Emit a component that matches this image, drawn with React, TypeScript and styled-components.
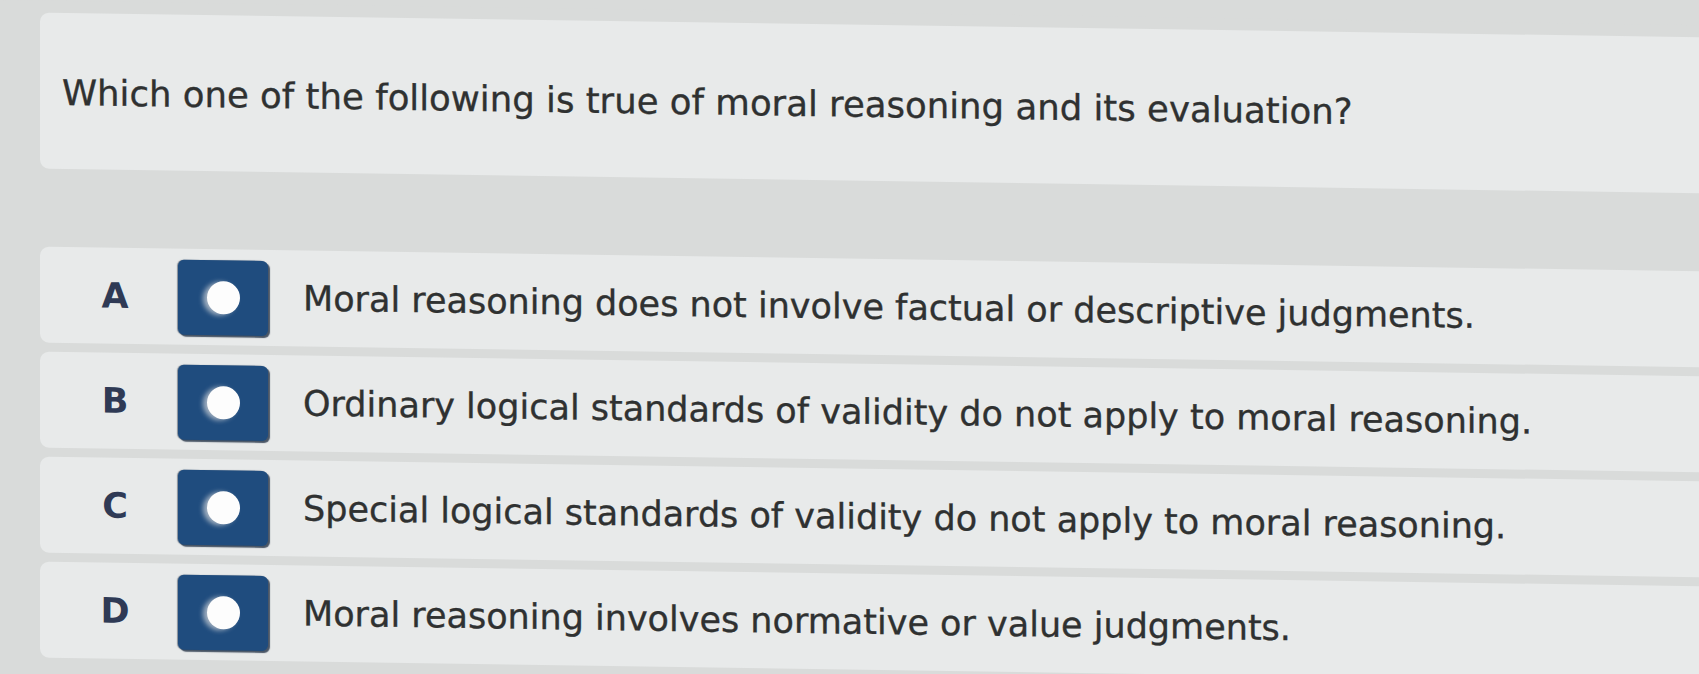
import React from "react";
import styled, { createGlobalStyle } from "styled-components";

const GlobalStyle = createGlobalStyle`
  html, body {
    margin: 0;
    padding: 0;
    background: #d9dbda;
    overflow: hidden;
  }
  body {
    font-family: "DejaVu Sans", Verdana, sans-serif;
  }
`;

const Page = styled.main`
  box-sizing: border-box;
  width: 1699px;
  height: 674px;
  padding: 12px 0 0 40px;
  background: #d9dbda;
  transform: skewY(0.85deg);
  transform-origin: 0 0;
`;

const QuestionCard = styled.section`
  box-sizing: border-box;
  height: 156px;
  padding: 59px 0 0 22px;
  background: #e8eaea;
  border-radius: 9px 0 0 9px;
`;

const QuestionText = styled.h1`
  margin: 0;
  font-size: 35.5px;
  line-height: 42px;
  font-weight: normal;
  color: #2f3131;
  -webkit-text-stroke: 0.35px #2f3131;
  white-space: nowrap;
`;

const OptionList = styled.ul`
  list-style: none;
  margin: 78px 0 0 0;
  padding: 0;
  display: flex;
  flex-direction: column;
  gap: 9px;
`;

const OptionRow = styled.li`
  box-sizing: border-box;
  height: 96px;
  display: flex;
  align-items: center;
  padding-left: 52px;
  background: #e8eaea;
  border-radius: 9px 0 0 9px;
`;

const Letter = styled.span`
  width: 46px;
  text-align: center;
  font-size: 35px;
  font-weight: bold;
  color: #2f3a55;
`;

const RadioBox = styled.span`
  box-sizing: border-box;
  width: 90px;
  height: 75px;
  margin-left: 40px;
  flex-shrink: 0;
  display: flex;
  align-items: center;
  justify-content: center;
  background: #1f4c7e;
  border-radius: 6px;
  box-shadow: 2px 2px 1px rgba(35, 50, 70, 0.8), -1px 0 1px rgba(35, 50, 70, 0.5);
`;

const RadioDot = styled.span`
  width: 33px;
  height: 33px;
  border-radius: 50%;
  background: #fdfdfd;
  box-shadow: -4px 1px 5px rgba(205, 210, 215, 0.75);
`;

const OptionText = styled.span`
  margin-left: 35px;
  font-size: 35px;
  color: #2f3131;
  -webkit-text-stroke: 0.35px #2f3131;
  white-space: nowrap;
`;

const options = [
  { letter: "A", text: "Moral reasoning does not involve factual or descriptive judgments." },
  { letter: "B", text: "Ordinary logical standards of validity do not apply to moral reasoning." },
  { letter: "C", text: "Special logical standards of validity do not apply to moral reasoning." },
  { letter: "D", text: "Moral reasoning involves normative or value judgments." },
];

export default function App() {
  return (
    <>
      <GlobalStyle />
      <Page>
        <QuestionCard>
          <QuestionText>
            Which one of the following is true of moral reasoning and its evaluation?
          </QuestionText>
        </QuestionCard>
        <OptionList>
          {options.map((o) => (
            <OptionRow key={o.letter}>
              <Letter>{o.letter}</Letter>
              <RadioBox>
                <RadioDot />
              </RadioBox>
              <OptionText>{o.text}</OptionText>
            </OptionRow>
          ))}
        </OptionList>
      </Page>
    </>
  );
}
